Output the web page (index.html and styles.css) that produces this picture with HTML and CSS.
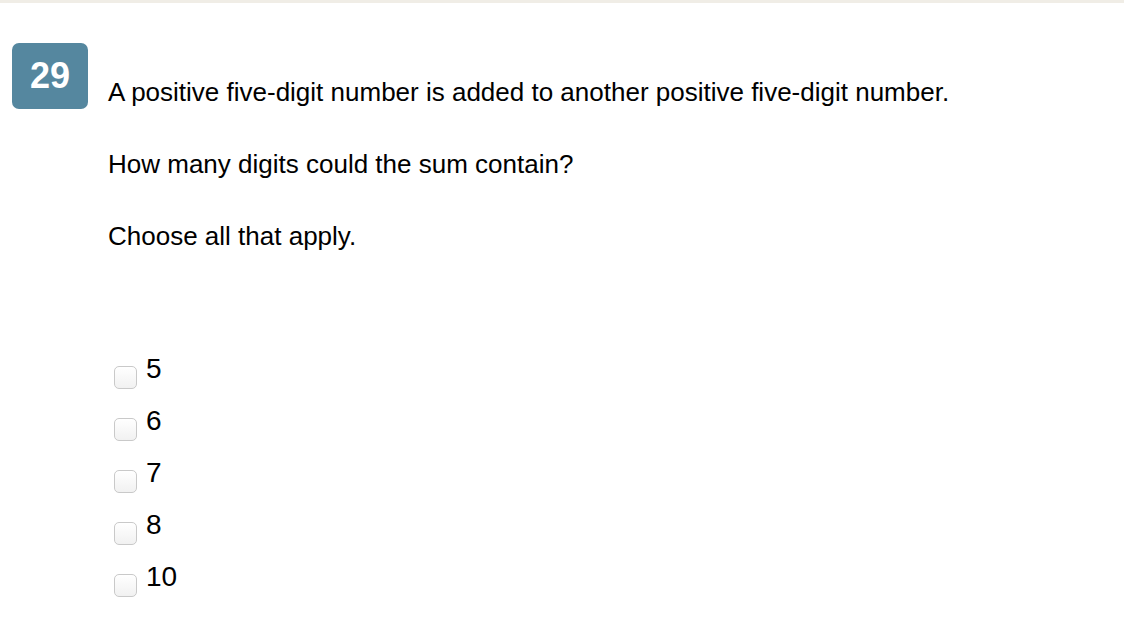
FILE: index.html
```html
<!DOCTYPE html>
<html lang="en">
<head>
<meta charset="utf-8">
<title>Question 29</title>
<link rel="stylesheet" href="styles.css">
</head>
<body>
<div class="topbar"></div>
<div class="question">
  <div class="badge">29</div>
  <div class="content">
    <p class="stem">A positive five-digit number is added to another positive five-digit number.</p>
    <p class="stem">How many digits could the sum contain?</p>
    <p class="stem">Choose all that apply.</p>
    <ul class="options">
      <li class="option"><span class="box"></span><span class="label">5</span></li>
      <li class="option"><span class="box"></span><span class="label">6</span></li>
      <li class="option"><span class="box"></span><span class="label">7</span></li>
      <li class="option"><span class="box"></span><span class="label">8</span></li>
      <li class="option"><span class="box"></span><span class="label">10</span></li>
    </ul>
  </div>
</div>
</body>
</html>
```
FILE: styles.css
```css
html, body {
  margin: 0;
  padding: 0;
  background: #ffffff;
  font-family: "Liberation Sans", Arial, Helvetica, sans-serif;
  color: #000000;
}
.topbar {
  height: 3px;
  background: #f0ede6;
}
.question {
  display: flex;
  align-items: flex-start;
  padding: 40px 0 0 12px;
}
.badge {
  width: 76px;
  height: 66px;
  border-radius: 7px;
  background: #55879f;
  color: #ffffff;
  font-weight: bold;
  font-size: 36px;
  display: flex;
  align-items: center;
  justify-content: center;
}
.content {
  margin-left: 20px;
  padding-top: 34px;
}
.stem {
  margin: 0 0 42px 0;
  font-size: 26px;
  line-height: 30px;
}
.options {
  list-style: none;
  margin: 100px 0 0 0;
  padding: 0 0 0 6px;
}
.option {
  display: flex;
  align-items: flex-start;
  height: 52px;
}
.box {
  width: 21px;
  height: 21px;
  margin-top: 15px;
  border: 1px solid #c9c9c9;
  border-radius: 5px;
  background: linear-gradient(#ffffff, #f1f1f1);
}
.label {
  margin: 3px 0 0 9px;
  font-size: 28px;
  line-height: 30px;
}
```
